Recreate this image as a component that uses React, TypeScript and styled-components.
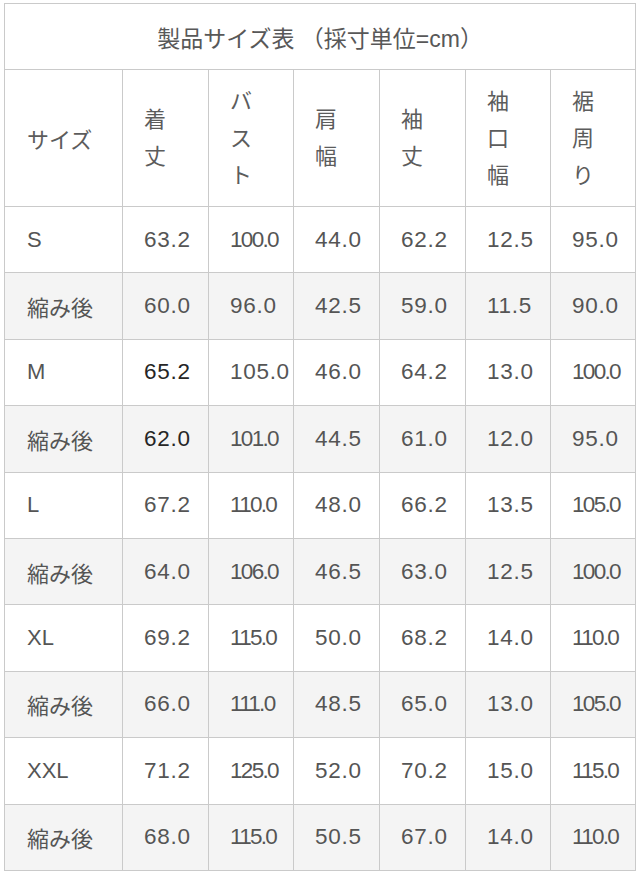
import React from "react";
import styled, { createGlobalStyle } from "styled-components";

const Global = createGlobalStyle`
  html, body { margin: 0; padding: 0; background: #fff; }
  body { font-family: "Liberation Sans", "Noto Sans CJK JP", sans-serif; }
`;

const Page = styled.div`
  padding: 3px 5px 3px 4px;
`;

const Table = styled.table`
  border-collapse: collapse;
  table-layout: fixed;
  width: 632px;
  color: #555;
  font-family: "Liberation Sans", "Noto Sans CJK JP", sans-serif;
`;

const TitleRow = styled.tr`
  height: 66px;
`;

const HeadRow = styled.tr`
  height: 137px;
`;

const BodyRow = styled.tr`
  height: 66.4px;
`;

const Cell = styled.td<{ $shade?: boolean }>`
  border: 1px solid #cacaca;
  background: ${(p) => (p.$shade ? "#f4f4f4" : "#fff")};
  padding: 0 0 0 21px;
  font-size: 22.5px;
  text-align: left;
  vertical-align: middle;
  white-space: nowrap;
`;

const LabelCell = styled(Cell)`
  padding-left: 22px;
  font-size: 22px;
`;

const Num = styled.span<{ $tight?: boolean; $dark?: boolean }>`
  letter-spacing: ${(p) => (p.$tight ? "-1.7px" : "0.7px")};
  color: ${(p) => (p.$dark ? "#262626" : "inherit")};
`;

const TitleCell = styled.th`
  border: 1px solid #cacaca;
  font-size: 23px;
  font-weight: 400;
  color: #585858;
  text-align: center;
  padding: 0 0 0 0;
`;

const HeadCell = styled.th<{ $first?: boolean }>`
  border: 1px solid #cacaca;
  font-size: 22px;
  font-weight: 400;
  color: #5c5c5c;
  text-align: left;
  vertical-align: middle;
  padding: 0 0 0 ${(p) => (p.$first ? "22px" : "21px")};
`;

const Stack = styled.div`
  display: flex;
  flex-direction: column;
  line-height: 37px;
`;

const widths = [118, 86, 85, 86, 86, 85, 85];
const heads = ["着丈", "バスト", "肩幅", "袖丈", "袖口幅", "裾周り"];

type Row = { label: string; vals: string[]; dark?: number[]; loose?: number[] };

const rows: Row[] = [
  { label: "S", vals: ["63.2", "100.0", "44.0", "62.2", "12.5", "95.0"] },
  { label: "縮み後", vals: ["60.0", "96.0", "42.5", "59.0", "11.5", "90.0"] },
  { label: "M", vals: ["65.2", "105.0", "46.0", "64.2", "13.0", "100.0"], dark: [0], loose: [1] },
  { label: "縮み後", vals: ["62.0", "101.0", "44.5", "61.0", "12.0", "95.0"], dark: [0] },
  { label: "L", vals: ["67.2", "110.0", "48.0", "66.2", "13.5", "105.0"] },
  { label: "縮み後", vals: ["64.0", "106.0", "46.5", "63.0", "12.5", "100.0"] },
  { label: "XL", vals: ["69.2", "115.0", "50.0", "68.2", "14.0", "110.0"] },
  { label: "縮み後", vals: ["66.0", "111.0", "48.5", "65.0", "13.0", "105.0"] },
  { label: "XXL", vals: ["71.2", "125.0", "52.0", "70.2", "15.0", "115.0"] },
  { label: "縮み後", vals: ["68.0", "115.0", "50.5", "67.0", "14.0", "110.0"] },
];

export default function App() {
  return (
    <Page>
      <Global />
      <Table>
        <colgroup>
          {widths.map((w, i) => (
            <col key={i} style={{ width: w }} />
          ))}
        </colgroup>
        <thead>
          <TitleRow>
            <TitleCell colSpan={7}>製品サイズ表 （採寸単位=cm）</TitleCell>
          </TitleRow>
          <HeadRow>
            <HeadCell $first>サイズ</HeadCell>
            {heads.map((h) => (
              <HeadCell key={h}>
                <Stack>
                  {h.split("").map((c, i) => (
                    <span key={i}>{c}</span>
                  ))}
                </Stack>
              </HeadCell>
            ))}
          </HeadRow>
        </thead>
        <tbody>
          {rows.map((r, ri) => {
            const shade = r.label === "縮み後";
            return (
              <BodyRow key={ri}>
                <LabelCell $shade={shade}>{r.label}</LabelCell>
                {r.vals.map((v, vi) => (
                  <Cell key={vi} $shade={shade}>
                    <Num
                      $tight={v.length === 5 && !(r.loose || []).includes(vi)}
                      $dark={(r.dark || []).includes(vi)}
                    >
                      {v}
                    </Num>
                  </Cell>
                ))}
              </BodyRow>
            );
          })}
        </tbody>
      </Table>
    </Page>
  );
}
